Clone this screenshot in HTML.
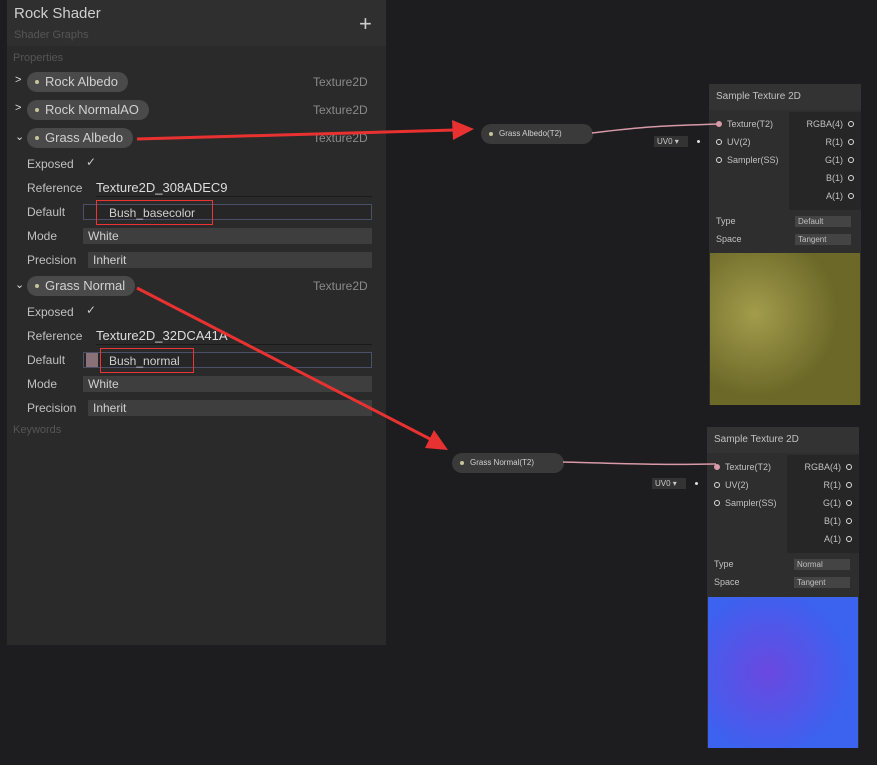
<!DOCTYPE html>
<html><head><style>
body{margin:0;width:877px;height:765px;background:#1d1c1e;font-family:"Liberation Sans",sans-serif;position:relative;overflow:hidden;color:#c8c8c8}
.a{position:absolute}
.panel{left:7px;top:0;width:379px;height:645px;background:#2a2a2a}
.hdr{left:7px;top:0;width:379px;height:46px;background:#2f2f2f}
.pill{position:absolute;height:20px;border-radius:10px;background:#4a4a4a;font-size:13px;line-height:20px;padding:0 10px 0 18px;color:#d0d0d0}
.pill:before{content:"";position:absolute;left:8px;top:8px;width:4px;height:4px;border-radius:2px;background:#c5c59a}
.t2{position:absolute;left:313px;font-size:12px;color:#8a8a8a}
.lbl{position:absolute;left:27px;font-size:12px;color:#c0c0c0}
.fld{position:absolute;height:16px;background:#3e3e3e;font-size:12px;line-height:16px;color:#d0d0d0;padding-left:5px;box-sizing:border-box}
.arr{position:absolute;left:15px;font-size:11px;color:#ddd}
.node{position:absolute;width:152px;background:#2e2e2e;font-size:9px;color:#c0c0c0}
.nt{height:26px;line-height:26px;padding-left:7px;background:#333;font-size:10px}
.dd{position:absolute;width:56px;height:11px;background:#444;font-size:8px;line-height:11px;padding-left:3px;box-sizing:border-box}
.port{position:absolute;font-size:9px;line-height:18px}
.c{position:absolute;width:4px;height:4px;border:1px solid #ddd;border-radius:3px}
</style></head><body>
<div class="a panel"></div><div class="a hdr"></div>
<div class="a" style="left:14px;top:5px;font-size:15px;color:#cfcfcf">Rock Shader</div>
<div class="a" style="left:14px;top:29px;font-size:11px;color:#555">Shader Graphs</div>
<div class="a" style="left:359px;top:11px;font-size:22px;color:#ccc">+</div>
<div class="a" style="left:13px;top:52px;font-size:11px;color:#555">Properties</div>

<div class="arr" style="top:74px">&gt;</div><div class="pill" style="left:27px;top:72px">Rock Albedo</div><div class="t2" style="top:75px">Texture2D</div>
<div class="arr" style="top:102px">&gt;</div><div class="pill" style="left:27px;top:100px">Rock NormalAO</div><div class="t2" style="top:103px">Texture2D</div>
<div class="arr" style="top:130px">⌄</div><div class="pill" style="left:27px;top:128px">Grass Albedo</div><div class="t2" style="top:131px">Texture2D</div>
<div class="lbl" style="top:157px">Exposed</div><div class="a" style="left:86px;top:155px;font-size:12px">✓</div>
<div class="lbl" style="top:181px">Reference</div><div class="a" style="left:96px;top:180px;font-size:13px;color:#ddd;border-bottom:1px solid #1a1a1a;width:276px;height:16px">Texture2D_308ADEC9</div>
<div class="lbl" style="top:205px">Default</div><div class="fld" style="left:83px;top:204px;width:289px;background:#262626;border:1px solid #4a5068;padding-left:25px">Bush_basecolor</div>
<div class="a" style="left:96px;top:200px;width:115px;height:23px;border:1px solid #e33"></div>
<div class="lbl" style="top:229px">Mode</div><div class="fld" style="left:83px;top:228px;width:289px">White</div>
<div class="lbl" style="top:253px">Precision</div><div class="fld" style="left:88px;top:252px;width:284px">Inherit</div>
<div class="arr" style="top:278px">⌄</div><div class="pill" style="left:27px;top:276px">Grass Normal</div><div class="t2" style="top:279px">Texture2D</div>
<div class="lbl" style="top:305px">Exposed</div><div class="a" style="left:86px;top:303px;font-size:12px">✓</div>
<div class="lbl" style="top:329px">Reference</div><div class="a" style="left:96px;top:328px;font-size:13px;color:#ddd;border-bottom:1px solid #1a1a1a;width:276px;height:16px">Texture2D_32DCA41A</div>
<div class="lbl" style="top:353px">Default</div><div class="fld" style="left:83px;top:352px;width:289px;background:#262626;border:1px solid #4a5068;padding-left:25px">Bush_normal</div>
<div class="a" style="left:86px;top:353px;width:12px;height:14px;background:#8a7078"></div>
<div class="a" style="left:100px;top:348px;width:92px;height:23px;border:1px solid #e33"></div>
<div class="lbl" style="top:377px">Mode</div><div class="fld" style="left:83px;top:376px;width:289px">White</div>
<div class="lbl" style="top:401px">Precision</div><div class="fld" style="left:88px;top:400px;width:284px">Inherit</div>
<div class="a" style="left:13px;top:424px;font-size:11px;color:#555">Keywords</div>

<div class="pill" style="left:481px;top:124px;width:84px;font-size:8px;background:#3a3a3a">Grass Albedo(T2)</div>
<div class="pill" style="left:452px;top:453px;width:84px;font-size:8px;background:#3a3a3a">Grass Normal(T2)</div>

<div class="node" style="left:709px;top:84px;height:321px"><div class="nt">Sample Texture 2D</div>
<div class="c" style="left:7px;top:37px;background:#d89aa8;border-color:#d89aa8"></div><div class="c" style="left:7px;top:55px"></div><div class="c" style="left:7px;top:73px"></div>
<div class="port" style="left:18px;top:31px">Texture(T2)<br>UV(2)<br>Sampler(SS)</div>
<div class="a" style="left:80px;top:28px;width:72px;height:98px;background:#262626"></div>
<div class="port" style="left:92px;top:31px;text-align:right;width:42px">RGBA(4)<br>R(1)<br>G(1)<br>B(1)<br>A(1)</div>
<div class="c" style="left:139px;top:37px"></div><div class="c" style="left:139px;top:55px"></div><div class="c" style="left:139px;top:73px"></div><div class="c" style="left:139px;top:91px"></div><div class="c" style="left:139px;top:109px"></div>
<div class="port" style="left:7px;top:128px">Type</div><div class="dd" style="left:86px;top:132px">Default</div>
<div class="port" style="left:7px;top:146px">Space</div><div class="dd" style="left:86px;top:150px">Tangent</div>
<div class="a" style="left:1px;top:169px;width:150px;height:152px;background:#7d7a32;background-image:radial-gradient(circle at 30% 40%,#a39c4c 0,#6b6828 60%)"></div>
</div>
<div class="node" style="left:707px;top:427px;height:321px"><div class="nt">Sample Texture 2D</div>
<div class="c" style="left:7px;top:37px;background:#d89aa8;border-color:#d89aa8"></div><div class="c" style="left:7px;top:55px"></div><div class="c" style="left:7px;top:73px"></div>
<div class="port" style="left:18px;top:31px">Texture(T2)<br>UV(2)<br>Sampler(SS)</div>
<div class="a" style="left:80px;top:28px;width:72px;height:98px;background:#262626"></div>
<div class="port" style="left:92px;top:31px;text-align:right;width:42px">RGBA(4)<br>R(1)<br>G(1)<br>B(1)<br>A(1)</div>
<div class="c" style="left:139px;top:37px"></div><div class="c" style="left:139px;top:55px"></div><div class="c" style="left:139px;top:73px"></div><div class="c" style="left:139px;top:91px"></div><div class="c" style="left:139px;top:109px"></div>
<div class="port" style="left:7px;top:128px">Type</div><div class="dd" style="left:87px;top:132px">Normal</div>
<div class="port" style="left:7px;top:146px">Space</div><div class="dd" style="left:87px;top:150px">Tangent</div>
<div class="a" style="left:1px;top:170px;width:150px;height:151px;background:#4f5fe8;background-image:radial-gradient(circle at 40% 50%,#6a48e0 0,#3c62f0 70%)"></div>
</div>
<div class="dd" style="left:654px;top:136px;width:34px;background:#333">UV0 ▾</div>
<div class="a" style="left:697px;top:140px;width:3px;height:3px;background:#ddd;border-radius:2px"></div>
<div class="dd" style="left:652px;top:478px;width:34px;background:#333">UV0 ▾</div>
<div class="a" style="left:695px;top:482px;width:3px;height:3px;background:#ddd;border-radius:2px"></div>

<svg class="a" style="left:0;top:0" width="877" height="765">
<path d="M592 133 C650 126 660 126 718 124" stroke="#d89aa8" stroke-width="1.5" fill="none"/>
<path d="M563 462 C640 464 660 465 716 464" stroke="#d89aa8" stroke-width="1.5" fill="none"/>
<line x1="137" y1="139" x2="455" y2="130" stroke="#e83232" stroke-width="3"/>
<polygon points="474,129 452,120 453,140" fill="#e83232"/>
<line x1="137" y1="288" x2="432" y2="440" stroke="#e83232" stroke-width="3"/>
<polygon points="448,450 425,448 434,430" fill="#e83232"/>
</svg>
</body></html>
